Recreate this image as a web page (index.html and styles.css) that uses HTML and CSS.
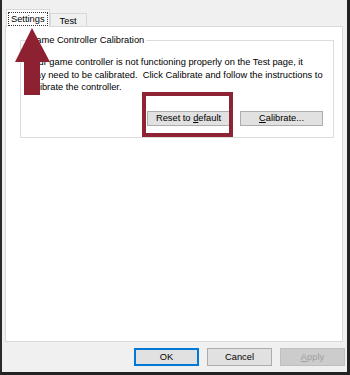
FILE: index.html
```html
<!DOCTYPE html>
<html lang="en">
<head>
    <meta charset="UTF-8">
    <meta name="viewport" content="width=device-width, initial-scale=1.0">
    <title>Game Controller Properties</title>
    <link rel="stylesheet" href="styles.css">
</head>
<body>
    <div class="dialog">
        <!-- tabs -->
        <div class="tabs">
            <div class="tab active"><span class="focus">Settings</span></div>
            <div class="tab">Test</div>
        </div>
        <!-- tab page -->
        <div class="panel">
            <fieldset class="group">
                <legend>Game Controller Calibration</legend>
                <p class="info">
                    Your game controller is not functioning properly on the Test page, it<br>
                    may need to be calibrated.&nbsp; Click Calibrate and follow the instructions to<br>
                    calibrate the controller.
                </p>
                <div class="actions">
                    <button class="btn wide">Reset to <u>d</u>efault</button>
                    <button class="btn wide"><u>C</u>alibrate...</button>
                </div>
            </fieldset>
        </div>
        <!-- dialog buttons -->
        <div class="footer">
            <button class="btn default">OK</button>
            <button class="btn">Cancel</button>
            <button class="btn" disabled><u>A</u>pply</button>
        </div>

        <!-- annotations -->
        <div class="highlight"></div>
        <svg class="arrow" width="60" height="100" viewBox="0 0 60 100">
            <polygon points="32,28 50,62 40,62 40,95 24,95 24,62 15,62" fill="#8e2131"/>
        </svg>
    </div>
</body>
</html>
```

FILE: styles.css
```css
html, body { margin: 0; padding: 0; }
body {
    width: 350px;
    height: 375px;
    font-family: "Liberation Sans", Arial, sans-serif;
    font-size: 9.3px;
    color: #000;
}
.dialog {
    position: relative;
    box-sizing: border-box;
    height: 375px;
    padding: 10px 4px 0 3px;
    background: #f0f0f0;
    border-left: 2px solid #2a2a2a;
    border-right: 3px solid #222;
    border-bottom: 3px solid #222;
    display: flex;
    flex-direction: column;
}
.tabs {
    display: flex;
    align-items: flex-end;
    height: 17px;
    margin-bottom: -1px;
    padding-left: 1px;
}
.tab {
    box-sizing: border-box;
    height: 14px;
    padding: 0 9px;
    border: 1px solid #d9d9d9;
    border-bottom: none;
    background: #f0f0f0;
    display: flex;
    align-items: center;
}
.tab.active {
    height: 18px;
    padding: 0 2px;
    background: #fff;
    position: relative;
    z-index: 1;
}
.tab .focus {
    outline: 1px dotted #333;
    padding: 1px 2px;
}
.panel {
    box-sizing: border-box;
    height: 316px;
    background: #fff;
    border: 1px solid #d9d9d9;
    padding: 8px 8px 0 14px;
}
.group {
    margin: 0;
    padding: 0 10px 11px 7px;
    border: 1px solid #dcdcdc;
}
.group legend {
    padding: 0 2px;
    margin-left: -1px;
}
.info {
    margin: 11px 0 0 0;
    line-height: 12.5px;
    white-space: nowrap;
}
.actions {
    display: flex;
    justify-content: flex-end;
    gap: 10px;
    margin-top: 17px;
}
.btn {
    box-sizing: border-box;
    width: 65px;
    height: 18px;
    padding: 0;
    font: inherit;
    color: #000;
    background: #e1e1e1;
    border: 1px solid #adadad;
}
.btn.wide { width: 83px; height: 15px; }
.btn.default { border: 2px solid #0078d7; }
.btn:disabled { color: #a0a0a0; background: #cccccc; border-color: #bfbfbf; }
.footer {
    display: flex;
    justify-content: flex-end;
    gap: 8px;
    margin: 6px -2px 0 0;
}
.highlight {
    position: absolute;
    left: 140px;
    top: 92px;
    width: 91px;
    height: 45px;
    box-sizing: border-box;
    border: 4px solid #8c2433;
}
.arrow {
    position: absolute;
    left: -2px;
    top: 0;
}
```
